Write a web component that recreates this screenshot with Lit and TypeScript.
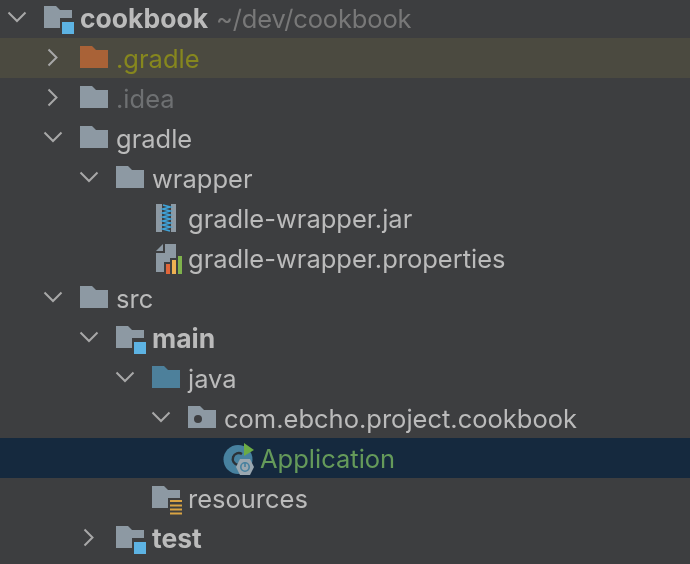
import { LitElement, html, css, svg } from 'lit';
import { customElement } from 'lit/decorators.js';

type Row = {
  depth: number;
  open?: boolean; // undefined means leaf, no chevron
  icon: string;
  name: string;
  hint?: string;
  kind?: string;
};

const ROWS: Row[] = [
  { depth: 0, open: true, icon: 'module', name: 'cookbook', hint: '~/dev/cookbook', kind: 'bold' },
  { depth: 1, open: false, icon: 'excluded', name: '.gradle', kind: 'ignored' },
  { depth: 1, open: false, icon: 'folder', name: '.idea', kind: 'dim' },
  { depth: 1, open: true, icon: 'folder', name: 'gradle' },
  { depth: 2, open: true, icon: 'folder', name: 'wrapper' },
  { depth: 3, icon: 'jar', name: 'gradle-wrapper.jar' },
  { depth: 3, icon: 'props', name: 'gradle-wrapper.properties' },
  { depth: 1, open: true, icon: 'folder', name: 'src' },
  { depth: 2, open: true, icon: 'module', name: 'main', kind: 'bold' },
  { depth: 3, open: true, icon: 'source', name: 'java' },
  { depth: 4, open: true, icon: 'package', name: 'com.ebcho.project.cookbook' },
  { depth: 5, icon: 'spring', name: 'Application', kind: 'run' },
  { depth: 3, icon: 'resources', name: 'resources' },
  { depth: 2, open: false, icon: 'module', name: 'test', kind: 'bold' },
];

const FOLDER = 'M8 8H20L24 12H36V30H8Z';
const CUT_FOLDER = 'M8 8H20L24 12H36V20H24V30H8Z';
const ZIPPER = 'M19 7L26 9L19 11L26 13L19 15L26 17L19 19L26 21L19 23L26 25L19 27L26 29L19 31L26 33';

// all icons share a 36x40 box, same as the row height
function iconBody(name: string) {
  switch (name) {
    case 'module':
      return svg`<path class="gray" d=${CUT_FOLDER} />
        <rect x="26" y="24" width="12" height="12" fill="#5db3e3" />`;
    case 'excluded':
      return svg`<path d=${FOLDER} fill="#a96237" />`;
    case 'source':
      return svg`<path d=${FOLDER} fill="#4d809b" />`;
    case 'package':
      return svg`<path class="gray" d=${FOLDER} /><circle cx="18" cy="21" r="4" fill="#3d3e40" />`;
    case 'resources':
      return svg`<path class="gray" d=${CUT_FOLDER} />
        <path d="M26 23H38M26 27.5H38M26 31.5H38M26 35.5H38" stroke="#d9a343" stroke-width="2" />`;
    case 'jar':
      return svg`<path class="gray" d="M12 6H32V34H12Z" />
        <rect x="18" y="6" width="9" height="28" fill="#3d3e40" />
        <path d=${ZIPPER} fill="none" stroke="#3fa3d9" stroke-width="1.8" />`;
    case 'props':
      return svg`<path class="gray" d="M12 13L19 6V13Z" />
        <path class="gray" d="M21 6H32V20H26V24H20V34H12V15H21Z" />
        <rect x="22" y="26" width="4" height="10" fill="#e0663a" />
        <rect x="28" y="22" width="4" height="14" fill="#edb152" />
        <rect x="34" y="18" width="4" height="18" fill="#7fb24c" />`;
    case 'spring':
      return svg`<circle cx="22" cy="21.5" r="14.5" fill="#47819f" />
        <path d="M26 16A6 6 0 1 0 22 27" fill="none" stroke="#2b3138" stroke-width="2.4" />
        <path d="M28 5L38 12L28 18Z" fill="#6cab45" />
        <path d="M24 21H34L38 29L34 37H24L20 29Z" fill="#9aa7b0" />
        <circle cx="29" cy="29" r="4.2" fill="none" stroke="#47819f" stroke-width="1.6" />
        <path d="M29 24V29" stroke="#47819f" stroke-width="1.6" />`;
    default:
      return svg`<path class="gray" d=${FOLDER} />`;
  }
}

@customElement('app-root')
export class AppRoot extends LitElement {
  static styles = css`
    :host {
      display: block;
      width: 690px;
      height: 564px;
      overflow: hidden;
      background: #3d3e40;
      font-family: Inter, 'Liberation Sans', sans-serif;
      font-size: 25.5px;
      color: #bbbbbb;
    }

    .tree {
      margin-top: -2px;
      filter: blur(0.4px);
    }

    .row {
      display: flex;
      align-items: center;
      height: 40px;
      white-space: nowrap;
    }

    .row--ignored {
      background: #4b4a40;
    }

    .row--run {
      background: #15293e;
    }

    .chevron,
    .icon {
      flex: none;
      width: 36px;
      height: 40px;
      overflow: visible;
    }

    .chevron path {
      fill: none;
      stroke: #a8a8a8;
      stroke-width: 2;
    }

    .gray {
      fill: #8d99a3;
    }

    .name {
      margin-left: 8px;
    }

    .bold {
      font-size: 26.5px;
      font-weight: 700;
    }

    .ignored {
      color: #86871e;
    }

    .dim {
      color: #6e7072;
    }

    .run {
      color: #659a5a;
    }

    .hint {
      margin-left: 8px;
      letter-spacing: -0.15px;
      color: #787878;
    }
  `;

  private renderChevron(open?: boolean) {
    if (open === undefined) return html`<span class="chevron"></span>`;
    const d = open ? 'M8.5 14.5L17 23L25.5 14.5' : 'M12.5 11.5L20.5 19.5L12.5 27.5';
    return html`<svg class="chevron" viewBox="0 0 36 40"><path d=${d} /></svg>`;
  }

  render() {
    return html`
      <div class="tree">
        ${ROWS.map(
          (row) => html`
            <div class="row row--${row.kind ?? 'plain'}" style="padding-left:${row.depth * 36}px">
              ${this.renderChevron(row.open)}
              <svg class="icon" viewBox="0 0 36 40">${iconBody(row.icon)}</svg>
              <span class="name ${row.kind ?? ''}">${row.name}</span>
              ${row.hint ? html`<span class="hint">${row.hint}</span>` : ''}
            </div>
          `
        )}
      </div>
    `;
  }
}
